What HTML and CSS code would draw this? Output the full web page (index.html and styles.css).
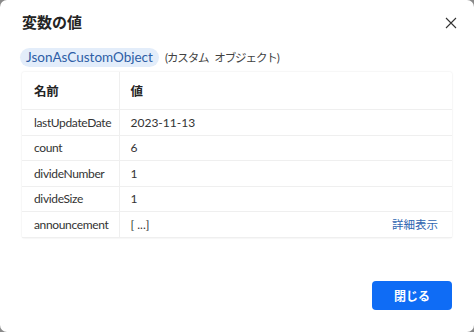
FILE: index.html
```html
<!DOCTYPE html>
<html lang="ja">
<head>
<meta charset="utf-8">
<link rel="stylesheet" href="styles.css">
</head>
<body>
<div class="dialog">
  <div class="header">
    <h1 class="title">変数の値</h1>
    <button class="close" aria-label="閉じる">
      <svg width="12" height="12" viewBox="0 0 12 12"><path d="M1 1L11 11M11 1L1 11" stroke="#333" stroke-width="1.1" fill="none"/></svg>
    </button>
  </div>
  <div class="typeline">
    <span class="tag">JsonAsCustomObject</span>
    <span class="typename">(カスタム オブジェクト)</span>
  </div>
  <div class="card">
    <table class="grid">
      <colgroup><col class="w1"><col></colgroup>
      <thead>
        <tr><th class="c1">名前</th><th class="c2">値</th></tr>
      </thead>
      <tbody>
        <tr><td class="c1">lastUpdateDate</td><td class="c2">2023-11-13</td></tr>
        <tr><td class="c1">count</td><td class="c2">6</td></tr>
        <tr><td class="c1">divideNumber</td><td class="c2">1</td></tr>
        <tr><td class="c1">divideSize</td><td class="c2">1</td></tr>
        <tr><td class="c1">announcement</td><td class="c2"><div class="valrow"><span>[ ...]</span><a class="more">詳細表示</a></div></td></tr>
      </tbody>
    </table>
  </div>
  <div class="footer">
    <button class="primary">閉じる</button>
  </div>
</div>
</body>
</html>
```

FILE: styles.css
```css
html, body {
  margin: 0;
  padding: 0;
  background: #8a8a8a;
}
body {
  width: 474px;
  height: 332px;
  overflow: hidden;
  font-family: Lato, "Noto Sans CJK JP", sans-serif;
  color: #242424;
}
.dialog {
  box-sizing: border-box;
  width: 474px;
  height: 332px;
  background: #fff;
  border-radius: 7px;
  padding: 11px 22px 22px 22px;
  display: flex;
  flex-direction: column;
}
.header {
  display: flex;
  align-items: center;
  justify-content: space-between;
  height: 22px;
}
.title {
  margin: 0;
  font-size: 15px;
  font-weight: 600;
  line-height: 22px;
  color: #242424;
}
.close {
  border: 0;
  background: none;
  padding: 0;
  margin-right: -5px;
  margin-top: 1px;
  width: 12px;
  height: 12px;
  display: flex;
}
.typeline {
  margin-top: 14px;
  display: flex;
  align-items: center;
  gap: 6px;
  height: 20px;
}
.tag {
  margin-left: -2px;
  background: #e3edfa;
  color: #2d5ea6;
  font-size: 13.5px;
  line-height: 19px;
  padding: 0 6px;
  border-radius: 10px;
}
.typename {
  font-size: 11.5px;
  letter-spacing: -1.1px;
  word-spacing: 4px;
  color: #424242;
}
.card {
  margin-top: 5px;
  box-shadow: 0 0 2px rgba(0,0,0,0.12);
  border-radius: 2px;
}
.grid {
  width: 100%;
  table-layout: fixed;
  border-collapse: collapse;
  font-size: 12px;
}
.grid .w1 {
  width: 97px;
}
.grid th, .grid td {
  text-align: left;
  padding: 0 11px;
  border-bottom: 1px solid #efefef;
  white-space: nowrap;
}
.grid th {
  height: 37px;
  font-weight: 600;
  font-size: 12.5px;
  color: #242424;
}
.grid td {
  height: 24.5px;
  color: #333;
}
.grid .c1 {
  padding: 0 0 0 12px;
  letter-spacing: -0.35px;
  border-right: 1px solid #efefef;
}
.valrow {
  display: flex;
  justify-content: space-between;
  align-items: center;
}
.more {
  color: #2f65b0;
  font-size: 11.5px;
  margin-right: 3px;
}
.footer {
  margin-top: auto;
  display: flex;
  justify-content: flex-end;
}
.primary {
  width: 80px;
  height: 29px;
  border: 0;
  border-radius: 4px;
  background: #0f6cf5;
  color: #fff;
  font-family: "Noto Sans CJK JP", sans-serif;
  font-weight: 700;
  font-size: 12px;
}
```
